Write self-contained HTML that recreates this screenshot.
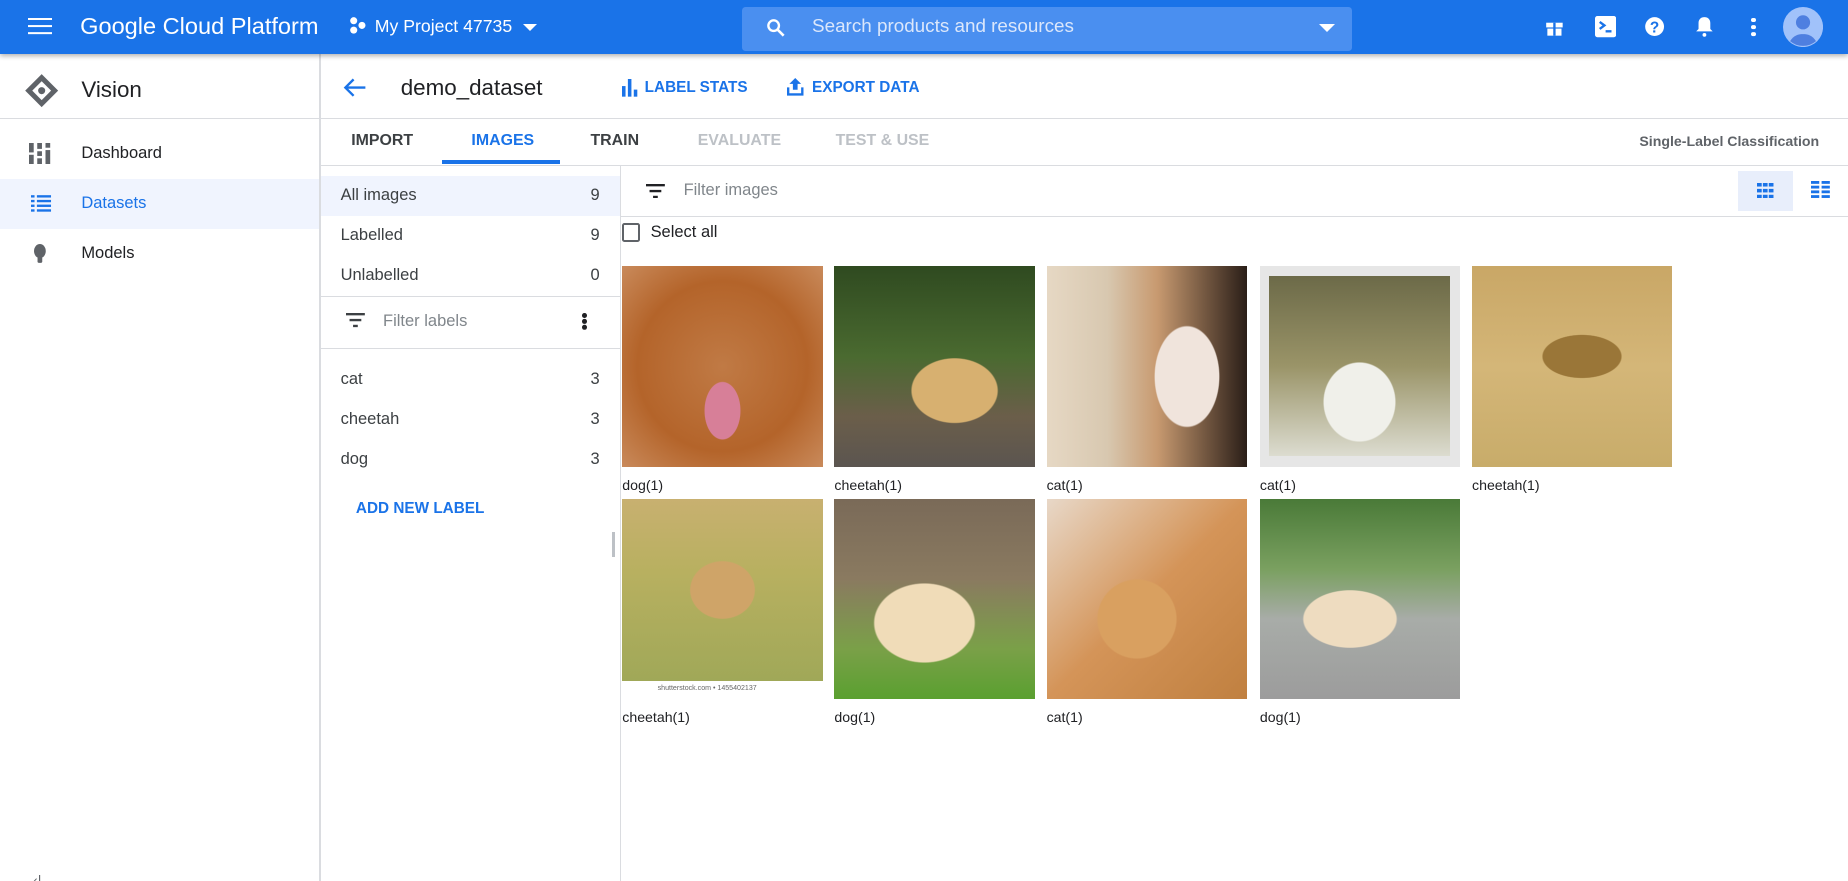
<!DOCTYPE html>
<html><head><meta charset="utf-8"><style>
html,body{margin:0;padding:0;width:1848px;height:881px;overflow:hidden;background:#fff}
#z{zoom:1.17857;width:1568px;height:748px;position:relative;font-family:"Liberation Sans",Arial,sans-serif;color:#202124}
.a{position:absolute}
.hdr{left:0;top:0;width:1568px;height:46px;background:#1a73e8;box-shadow:0 2px 4px rgba(0,0,0,.3);z-index:2}
.w{color:#fff}
.t14{font-size:14px}
.line{background:#dadce0}
.img{position:absolute;width:170px;height:170px}
.cap{position:absolute;font-size:12px;color:#202124}
.blue{color:#1a73e8}
</style></head><body><div id="z">
<div class="a hdr">
 <div class="a" style="left:24px;top:15px;width:20px;height:2px;background:#fff;box-shadow:0 6px 0 #fff,0 12px 0 #fff"></div>
 <div class="a w" style="left:68px;top:11px;font-size:20px">Google Cloud Platform</div>
 <svg class="a" style="left:296px;top:14px" width="16" height="16" viewBox="0 0 16 16"><circle cx="4" cy="4" r="3" fill="#fff"/><circle cx="4" cy="12" r="3" fill="#fff"/><circle cx="11" cy="8" r="3" fill="#fff"/></svg>
 <div class="a w" style="left:318px;top:14px;font-size:15px">My Project 47735</div>
 <div class="a" style="left:444px;top:20px;border-left:6px solid transparent;border-right:6px solid transparent;border-top:6px solid #fff"></div>
 <div class="a" style="left:630px;top:6px;width:517px;height:37px;background:#4a8ff0;border-radius:3px"></div>
 <svg class="a" style="left:650px;top:15px" width="16" height="16" viewBox="0 0 16 16"><circle cx="6.5" cy="6.5" r="4.5" stroke="#fff" stroke-width="2" fill="none"/><path d="M10 10l5 5" stroke="#fff" stroke-width="2.2"/></svg>
 <div class="a" style="left:689px;top:13px;font-size:16px;color:#dbe7fb">Search products and resources</div>
 <div class="a" style="left:1119px;top:20px;border-left:7px solid transparent;border-right:7px solid transparent;border-top:7px solid #fff"></div>
 <svg class="a" style="left:1311px;top:15px" width="16" height="16" viewBox="0 0 16 16"><rect x="1" y="4" width="14" height="4" fill="#fff"/><rect x="2" y="9" width="12" height="6" fill="#fff"/><rect x="7" y="4" width="2" height="11" fill="#1a73e8"/></svg>
 <svg class="a" style="left:1353px;top:14px" width="18" height="18" viewBox="0 0 18 18"><rect x="0" y="0" width="18" height="18" rx="2" fill="#fff"/><path d="M4 5l4 3-4 3" stroke="#1a73e8" stroke-width="2" fill="none"/><rect x="9" y="12" width="5" height="2" fill="#1a73e8"/></svg>
 <svg class="a" style="left:1395px;top:14px" width="18" height="18" viewBox="0 0 18 18"><circle cx="9" cy="9" r="8" fill="#fff"/><text x="9" y="14" text-anchor="middle" font-size="13" font-weight="bold" fill="#1a73e8" font-family="Liberation Sans">?</text></svg>
 <svg class="a" style="left:1438px;top:14px" width="16" height="18" viewBox="0 0 16 18"><path d="M8 1c-3 0-5 2-5 5v5l-2 2h14l-2-2V6c0-3-2-5-5-5z" fill="#fff"/><circle cx="8" cy="16" r="1.6" fill="#fff"/></svg>
 <div class="a" style="left:1486px;top:15px;width:4px;height:4px;border-radius:2px;background:#fff;box-shadow:0 6px 0 #fff,0 12px 0 #fff"></div>
 <svg class="a" style="left:1513px;top:6px" width="34" height="34" viewBox="0 0 34 34"><circle cx="17" cy="17" r="17" fill="#a1c2fa"/><circle cx="17" cy="13" r="6" fill="#4e7fe0"/><path d="M6 29c3-5 7-6 11-6s8 1 11 6a17 17 0 0 1-22 0z" fill="#4e7fe0"/></svg>
</div>
<!-- left nav -->
<div class="a line" style="left:271px;top:46px;width:1px;height:702px"></div>
<svg class="a" style="left:20px;top:62px" width="30" height="30" viewBox="0 0 30 30"><path d="M15 1L29 15 15 29 1 15z" fill="#5f6368"/><path d="M15 7L23 15 15 23 7 15z" fill="#fff"/><circle cx="15" cy="15" r="3" fill="#5f6368"/></svg>
<div class="a" style="left:69px;top:65px;font-size:19px">Vision</div>
<div class="a line" style="left:0;top:100px;width:272px;height:1px"></div>
<svg class="a" style="left:25px;top:121px" width="18" height="18" viewBox="0 0 18 18" fill="#5f6368"><rect x="0" y="0" width="4" height="8"/><rect x="0" y="10" width="4" height="8"/><rect x="7" y="0" width="4" height="5"/><rect x="7" y="7" width="4" height="4"/><rect x="7" y="13" width="4" height="5"/><rect x="14" y="0" width="4" height="4"/><rect x="14" y="6" width="4" height="12"/></svg>
<div class="a t14" style="left:69px;top:122px">Dashboard</div>
<div class="a" style="left:0;top:152px;width:271px;height:42px;background:#f0f4fe"></div>
<svg class="a" style="left:26px;top:165px" width="18" height="16" viewBox="0 0 18 16" fill="#1a73e8"><rect x="0" y="1" width="3" height="2"/><rect x="5" y="1" width="12" height="2"/><rect x="0" y="5" width="3" height="2"/><rect x="5" y="5" width="12" height="2"/><rect x="0" y="9" width="3" height="2"/><rect x="5" y="9" width="12" height="2"/><rect x="0" y="13" width="3" height="2"/><rect x="5" y="13" width="12" height="2"/></svg>
<div class="a t14 blue" style="left:69px;top:165px">Datasets</div>
<svg class="a" style="left:29px;top:207px" width="10" height="18" viewBox="0 0 10 18" fill="#5f6368"><ellipse cx="5" cy="6" rx="5" ry="6"/><rect x="3" y="11" width="4" height="5" rx="1"/></svg>
<div class="a t14" style="left:69px;top:207px">Models</div>
<div class="a" style="left:28px;top:740px;font-size:12px;color:#5f6368">‹|</div>
<!-- main header -->
<svg class="a" style="left:291px;top:65px" width="20" height="18" viewBox="0 0 20 18"><path d="M19 9H3M9 2L2 9l7 7" stroke="#1a73e8" stroke-width="2" fill="none"/></svg>
<div class="a" style="left:340px;top:64px;font-size:19px">demo_dataset</div>
<svg class="a" style="left:528px;top:67px" width="14" height="15" viewBox="0 0 14 15" fill="#1a73e8"><rect x="0" y="6" width="3" height="9"/><rect x="5" y="0" width="3" height="15"/><rect x="10" y="9" width="3" height="6"/></svg>
<div class="a t14 blue" style="left:547px;top:67px;font-weight:bold;font-size:13px">LABEL STATS</div>
<svg class="a" style="left:668px;top:66px" width="14" height="16" viewBox="0 0 14 16" fill="#1a73e8"><path d="M7 0L2 5h3v5h4V5h3z"/><path d="M0 8h2v5h10V8h2v7H0z"/></svg>
<div class="a blue" style="left:689px;top:67px;font-weight:bold;font-size:13px">EXPORT DATA</div>
<div class="a line" style="left:272px;top:100px;width:1296px;height:1px"></div>
<div class="a" style="left:298px;top:112px;font-size:13.5px;font-weight:bold;color:#3c4043">IMPORT</div>
<div class="a blue" style="left:400px;top:112px;font-size:13.5px;font-weight:bold">IMAGES</div>
<div class="a" style="left:375px;top:136px;width:100px;height:3px;background:#1a73e8"></div>
<div class="a" style="left:501px;top:112px;font-size:13.5px;font-weight:bold;color:#3c4043">TRAIN</div>
<div class="a" style="left:592px;top:112px;font-size:13.5px;font-weight:bold;color:#bdc1c6">EVALUATE</div>
<div class="a" style="left:709px;top:112px;font-size:13.5px;font-weight:bold;color:#bdc1c6">TEST &amp; USE</div>
<div class="a" style="left:1391px;top:113px;font-size:12px;font-weight:bold;color:#5f6368">Single-Label Classification</div>
<div class="a line" style="left:272px;top:140px;width:1296px;height:1px"></div>
<!-- left panel -->
<div class="a line" style="left:526px;top:140px;width:1px;height:608px"></div>
<div class="a" style="left:272px;top:149px;width:254px;height:34px;background:#f0f4fe"></div>
<div class="a t14" style="left:289px;top:158px;color:#3c4043">All images</div><div class="a t14" style="left:501px;top:158px;color:#3c4043">9</div>
<div class="a t14" style="left:289px;top:192px;color:#3c4043">Labelled</div><div class="a t14" style="left:501px;top:192px;color:#3c4043">9</div>
<div class="a t14" style="left:289px;top:226px;color:#3c4043">Unlabelled</div><div class="a t14" style="left:501px;top:226px;color:#3c4043">0</div>
<div class="a line" style="left:272px;top:251px;width:254px;height:1px"></div>
<svg class="a" style="left:294px;top:266px" width="16" height="12" viewBox="0 0 16 12" fill="#3c4043"><rect x="0" y="0" width="16" height="2"/><rect x="3" y="5" width="10" height="2"/><rect x="6" y="10" width="4" height="2"/></svg>
<div class="a t14" style="left:325px;top:265px;color:#80868b">Filter labels</div>
<div class="a" style="left:494px;top:266px;width:4px;height:4px;border-radius:2px;background:#202124;box-shadow:0 5px 0 #202124,0 10px 0 #202124"></div>
<div class="a line" style="left:272px;top:295px;width:254px;height:1px"></div>
<div class="a t14" style="left:289px;top:314px;color:#3c4043">cat</div><div class="a t14" style="left:501px;top:314px;color:#3c4043">3</div>
<div class="a t14" style="left:289px;top:348px;color:#3c4043">cheetah</div><div class="a t14" style="left:501px;top:348px;color:#3c4043">3</div>
<div class="a t14" style="left:289px;top:382px;color:#3c4043">dog</div><div class="a t14" style="left:501px;top:382px;color:#3c4043">3</div>
<div class="a blue" style="left:302px;top:424px;font-size:13px;font-weight:bold">ADD NEW LABEL</div>
<div class="a" style="left:519px;top:451px;width:3px;height:22px;background:#bdc1c6"></div>
<!-- grid panel -->
<svg class="a" style="left:548px;top:156px" width="16" height="12" viewBox="0 0 16 12" fill="#202124"><rect x="0" y="0" width="16" height="2"/><rect x="3" y="5" width="10" height="2"/><rect x="6" y="10" width="4" height="2"/></svg>
<div class="a t14" style="left:580px;top:154px;color:#80868b">Filter images</div>
<div class="a" style="left:1475px;top:145px;width:46px;height:34px;background:#e8eefb"></div>
<svg class="a" style="left:1491px;top:155px" width="14" height="13" viewBox="0 0 14 13" fill="#1a73e8"><rect x="0" y="0" width="4" height="3"/><rect x="5" y="0" width="4" height="3"/><rect x="10" y="0" width="4" height="3"/><rect x="0" y="5" width="4" height="3"/><rect x="5" y="5" width="4" height="3"/><rect x="10" y="5" width="4" height="3"/><rect x="0" y="10" width="4" height="3"/><rect x="5" y="10" width="4" height="3"/><rect x="10" y="10" width="4" height="3"/></svg>
<svg class="a" style="left:1537px;top:154px" width="16" height="15" viewBox="0 0 16 15" fill="#1a73e8"><rect x="0" y="0" width="7" height="2.4"/><rect x="9" y="0" width="7" height="2.4"/><rect x="0" y="4" width="7" height="2.4"/><rect x="9" y="4" width="7" height="2.4"/><rect x="0" y="8" width="7" height="2.4"/><rect x="9" y="8" width="7" height="2.4"/><rect x="0" y="12" width="7" height="2.4"/><rect x="9" y="12" width="7" height="2.4"/></svg>
<div class="a line" style="left:527px;top:183px;width:1041px;height:1px"></div>
<div class="a" style="left:528px;top:189px;width:12px;height:13px;border:2px solid #5f6368;border-radius:2px"></div>
<div class="a t14" style="left:552px;top:189px">Select all</div>
<!-- images row 1 -->
<div class="img" style="left:528px;top:226px;background:radial-gradient(ellipse 25px 40px at 50% 72%,#d77f98 60%,transparent 62%),radial-gradient(circle at 50% 50%,#c07a45,#b4642a 60%,#c98a5b 100%)"></div>
<div class="img" style="left:708px;top:226px;background:radial-gradient(ellipse 60px 45px at 60% 62%,#d7b070 60%,transparent 62%),linear-gradient(180deg,#2f4a20 0%,#4a6a30 45%,#6b5e4a 75%,#5b5550 100%)"></div>
<div class="img" style="left:888px;top:226px;background:radial-gradient(ellipse 45px 70px at 70% 55%,#f0e4dc 60%,transparent 62%),linear-gradient(90deg,#e6d8c4 0%,#d8c8b0 30%,#c89a70 55%,#2a1e18 100%)"></div>
<div class="img" style="left:1069px;top:226px;background:#e6e6e6"><div style="position:absolute;left:8px;top:8px;width:153px;height:153px;background:radial-gradient(ellipse 50px 55px at 50% 70%,#f0f0ea 60%,transparent 62%),linear-gradient(180deg,#6c6a48,#9a9468 50%,#dcdcd0)"></div></div>
<div class="img" style="left:1249px;top:226px;background:radial-gradient(ellipse 55px 30px at 55% 45%,#9a7638 60%,transparent 62%),linear-gradient(180deg,#c9a766,#d4b678 50%,#c8ac6a)"></div>
<div class="cap" style="left:528px;top:405px">dog(1)</div>
<div class="cap" style="left:708px;top:405px">cheetah(1)</div>
<div class="cap" style="left:888px;top:405px">cat(1)</div>
<div class="cap" style="left:1069px;top:405px">cat(1)</div>
<div class="cap" style="left:1249px;top:405px">cheetah(1)</div>
<!-- row 2 -->
<div class="img" style="left:528px;top:423px;background:#fff"><div style="position:absolute;left:0;top:0;width:170px;height:155px;background:radial-gradient(ellipse 45px 40px at 50% 50%,#cfa468 60%,transparent 62%),linear-gradient(180deg,#c8b070,#b8b060 40%,#a0a858)"></div><div style="position:absolute;left:30px;top:158px;font-size:6px;color:#666">shutterstock.com • 1455402137</div></div>
<div class="img" style="left:708px;top:423px;background:radial-gradient(ellipse 70px 55px at 45% 62%,#f0dcb8 60%,transparent 62%),linear-gradient(180deg,#7a6a58 0%,#8a7a60 40%,#7aa048 75%,#5aa030 100%)"></div>
<div class="img" style="left:888px;top:423px;background:radial-gradient(ellipse 55px 55px at 45% 60%,#d9a060 60%,transparent 62%),linear-gradient(135deg,#e8d8c8,#d49458 50%,#c08040)"></div>
<div class="img" style="left:1069px;top:423px;background:radial-gradient(ellipse 65px 40px at 45% 60%,#eedcc0 60%,transparent 62%),linear-gradient(180deg,#4a7a38 0%,#7aa060 35%,#a8aca8 60%,#9c9c9c 100%)"></div>
<div class="cap" style="left:528px;top:602px">cheetah(1)</div>
<div class="cap" style="left:708px;top:602px">dog(1)</div>
<div class="cap" style="left:888px;top:602px">cat(1)</div>
<div class="cap" style="left:1069px;top:602px">dog(1)</div>
</div></body></html>
